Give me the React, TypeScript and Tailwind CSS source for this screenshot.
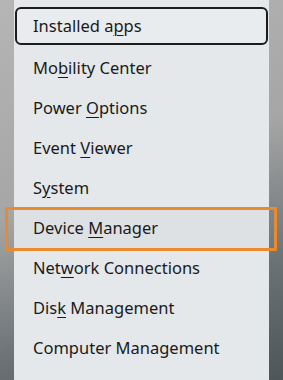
import React from "react";

type Item = { pre: string; key?: string; post?: string };

const items: Item[] = [
  { pre: "Installed a", key: "p", post: "ps" },
  { pre: "Mo", key: "b", post: "ility Center" },
  { pre: "Power ", key: "O", post: "ptions" },
  { pre: "Event ", key: "V", post: "iewer" },
  { pre: "S", key: "y", post: "stem" },
  { pre: "Device ", key: "M", post: "anager" },
  { pre: "Net", key: "w", post: "ork Connections" },
  { pre: "Dis", key: "k", post: " Management" },
  { pre: "Computer Management" },
];

function Label({ item }: { item: Item }) {
  return (
    <span>
      {item.pre}
      {item.key && <span className="underline underline-offset-[3px] decoration-1">{item.key}</span>}
      {item.post}
    </span>
  );
}

export default function App() {
  return (
    <div
      className="relative w-[283px] h-[380px] overflow-hidden bg-[linear-gradient(160deg,#b5b5b5_0%,#a6a6a6_45%,#6b7276_75%,#4d5558_100%)]"
      style={{ fontFamily: '"Noto Sans", "Open Sans", sans-serif' }}
    >
      <div className="ml-[14px] w-[255px] h-full bg-[#e4e8ea] pt-[7px] text-[16.5px] text-[#1a1a1a]">
        {items.map((item, i) => {
          if (i === 0) {
            return (
              <div
                key={i}
                className="mx-[1px] h-[38px] mb-[3px] flex items-center pl-[16px] pt-[1px] border-2 border-[#1c1c1c] rounded-[6px] bg-[#e9ecee]"
              >
                <Label item={item} />
              </div>
            );
          }
          return (
            <div
              key={i}
              className={`h-[40px] flex items-center pl-[19px] ${
                i === 5 ? "bg-[#dde1e4]" : ""
              }`}
            >
              <Label item={item} />
            </div>
          );
        })}
      </div>
      <div className="absolute left-[5px] top-[207px] w-[272px] h-[44px] border-[3px] border-[#e98a2f] rounded-[1px]" />
    </div>
  );
}
